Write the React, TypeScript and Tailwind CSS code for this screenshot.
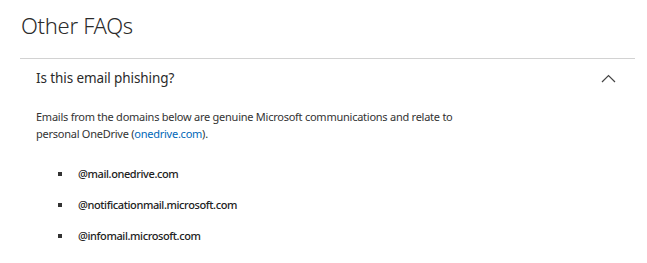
const domains = [
  "@mail.onedrive.com",
  "@notificationmail.microsoft.com",
  "@infomail.microsoft.com",
];

const App = () => {
  return (
    <div className="w-[647px] h-[263px] bg-white text-[#262626] font-['Noto_Sans',sans-serif] overflow-hidden">
      <div className="pl-5 pr-3">
        <h2 className="pt-[10px] pl-px text-[22px] leading-[30px] font-light text-[#2b2b2b] tracking-[-0.3px]">
          Other FAQs
        </h2>
        <div className="mt-[18px] w-[615px] border-t border-[#d2d2d2]" />

        <div className="pl-4 pr-[19px] pt-[10px] flex items-center justify-between">
          <span className="text-[13.5px] leading-[18px] tracking-[-0.1px] text-[#2a2a2a]">
            Is this email phishing?
          </span>
          <svg width="15" height="9" viewBox="0 0 15 9" fill="none">
            <path d="M1 8L7.5 1.5L14 8" stroke="#444" strokeWidth="1.2" />
          </svg>
        </div>

        <p className="pl-4 pt-[21px] w-[460px] text-[11px] leading-[17px] tracking-[-0.25px] text-[#333]">
          {"Emails from the domains below are genuine Microsoft communications and relate to personal OneDrive ("}
          <a className="text-[#0067b8]" href="#">onedrive.com</a>
          {")."}
        </p>

        <ul className="pl-[38px] pt-[23px] flex flex-col gap-[13px]">
          {domains.map((d) => (
            <li key={d} className="flex items-center h-[18px]">
              <span className="w-[4px] h-[4px] bg-[#333]" />
              <span className="ml-[16px] text-[11px] font-medium tracking-[-0.4px] text-[#222]">
                {d}
              </span>
            </li>
          ))}
        </ul>
      </div>
    </div>
  );
};

export default App;
